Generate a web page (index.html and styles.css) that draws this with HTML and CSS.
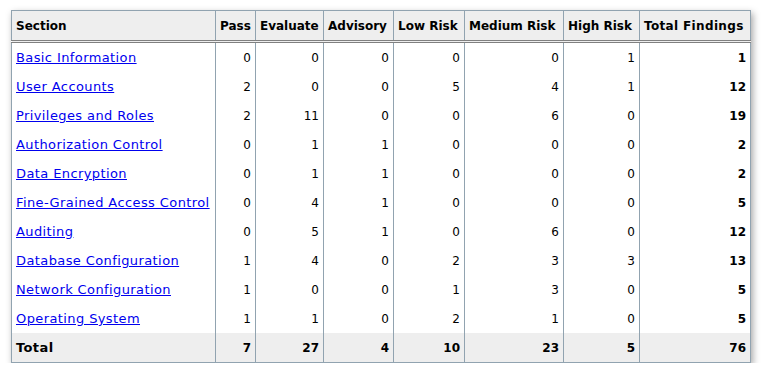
FILE: index.html
```html
<!DOCTYPE html>
<html>
<head>
<meta charset="utf-8">
<link rel="stylesheet" href="styles.css">
</head>
<body>
<div class="wrap">
<table class="report">
<colgroup>
<col class="c-sec"><col class="c-pass"><col class="c-eval"><col class="c-adv"><col class="c-low"><col class="c-med"><col class="c-high"><col class="c-tot">
</colgroup>
<thead>
<tr><th class="sec">Section</th><th>Pass</th><th>Evaluate</th><th>Advisory</th><th>Low Risk</th><th>Medium Risk</th><th>High Risk</th><th class="wide">Total Findings</th></tr>
</thead>
<tbody>
<tr><td class="sec"><a href="#">Basic Information</a></td><td>0</td><td>0</td><td>0</td><td>0</td><td>0</td><td>1</td><td class="tot">1</td></tr>
<tr><td class="sec"><a href="#">User Accounts</a></td><td>2</td><td>0</td><td>0</td><td>5</td><td>4</td><td>1</td><td class="tot">12</td></tr>
<tr><td class="sec"><a href="#">Privileges and Roles</a></td><td>2</td><td>11</td><td>0</td><td>0</td><td>6</td><td>0</td><td class="tot">19</td></tr>
<tr><td class="sec"><a href="#">Authorization Control</a></td><td>0</td><td>1</td><td>1</td><td>0</td><td>0</td><td>0</td><td class="tot">2</td></tr>
<tr><td class="sec"><a href="#">Data Encryption</a></td><td>0</td><td>1</td><td>1</td><td>0</td><td>0</td><td>0</td><td class="tot">2</td></tr>
<tr><td class="sec"><a href="#">Fine-Grained Access Control</a></td><td>0</td><td>4</td><td>1</td><td>0</td><td>0</td><td>0</td><td class="tot">5</td></tr>
<tr><td class="sec"><a href="#">Auditing</a></td><td>0</td><td>5</td><td>1</td><td>0</td><td>6</td><td>0</td><td class="tot">12</td></tr>
<tr><td class="sec"><a href="#">Database Configuration</a></td><td>1</td><td>4</td><td>0</td><td>2</td><td>3</td><td>3</td><td class="tot">13</td></tr>
<tr><td class="sec"><a href="#">Network Configuration</a></td><td>1</td><td>0</td><td>0</td><td>1</td><td>3</td><td>0</td><td class="tot">5</td></tr>
<tr><td class="sec"><a href="#">Operating System</a></td><td>1</td><td>1</td><td>0</td><td>2</td><td>1</td><td>0</td><td class="tot">5</td></tr>
</tbody>
<tfoot>
<tr><td class="sec">Total</td><td>7</td><td>27</td><td>4</td><td>10</td><td>23</td><td>5</td><td>76</td></tr>
</tfoot>
</table>
</div>
</body>
</html>
```
FILE: styles.css
```css
html, body {
  margin: 0;
  padding: 0;
  background: #fff;
}
.wrap {
  padding: 10px 0 0 11px;
}
.report {
  border-collapse: collapse;
  table-layout: fixed;
  width: 739px;
  font-family: "DejaVu Sans", Verdana, sans-serif;
  font-size: 12px;
  color: #000;
  border: 1px solid #91a3b0;
  box-shadow: 2px 3px 7px rgba(0,0,0,0.35);
}
.c-sec { width: 204px; }
.c-pass { width: 40px; }
.c-eval { width: 68px; }
.c-adv { width: 70px; }
.c-low { width: 71px; }
.c-med { width: 99px; }
.c-high { width: 76px; }
.c-tot { width: 111px; }
.report th {
  background: #eeeeee;
  font-weight: bold;
  text-align: left;
  height: 29px;
  padding: 0 4px;
  border: 1px solid #91a3b0;
  border-bottom: 3px double #808080;
  white-space: nowrap;
}
.report th.wide {
  letter-spacing: 0.35px;
}
.report td {
  height: 29px;
  padding: 0 4px;
  text-align: right;
  border-left: 1px solid #91a3b0;
  border-right: 1px solid #91a3b0;
  white-space: nowrap;
}
.report td.sec {
  text-align: left;
  font-size: 13px;
  letter-spacing: 0.4px;
}
.report td.tot {
  font-weight: bold;
}
.report a {
  color: #0000ee;
  text-decoration: underline;
}
.report tfoot td {
  background: #eeeeee;
  font-weight: bold;
}
```
